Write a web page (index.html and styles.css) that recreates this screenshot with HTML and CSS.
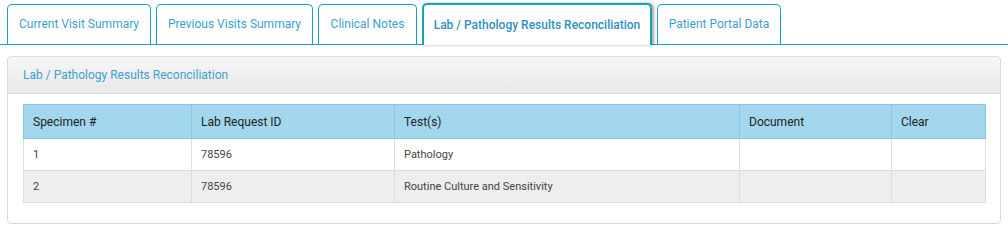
FILE: index.html
```html
<!DOCTYPE html>
<html>
<head>
<meta charset="utf-8">
<link rel="stylesheet" href="styles.css">
</head>
<body>
<ul class="tabs">
  <li class="tab t1">Current Visit Summary</li>
  <li class="tab t2">Previous Visits Summary</li>
  <li class="tab t3">Clinical Notes</li>
  <li class="tab t4 active">Lab / Pathology Results Reconciliation</li>
  <li class="tab t5">Patient Portal Data</li>
</ul>
<div class="panel">
  <div class="panel-head">Lab / Pathology Results Reconciliation</div>
  <div class="panel-body">
    <table class="grid">
      <colgroup>
        <col class="c1"><col class="c2"><col class="c3"><col class="c4"><col class="c5">
      </colgroup>
      <thead>
        <tr><th>Specimen #</th><th>Lab Request ID</th><th>Test(s)</th><th>Document</th><th>Clear</th></tr>
      </thead>
      <tbody>
        <tr><td>1</td><td>78596</td><td>Pathology</td><td></td><td></td></tr>
        <tr class="alt"><td>2</td><td>78596</td><td>Routine Culture and Sensitivity</td><td></td><td></td></tr>
      </tbody>
    </table>
  </div>
</div>
</body>
</html>
```
FILE: styles.css
```css
* { box-sizing: border-box; }
body {
  margin: 0;
  font-family: Roboto, "Liberation Sans", Arial, sans-serif;
  background: #fff;
}
.tabs {
  list-style: none;
  margin: 0;
  padding: 4px 0 0 7px;
  display: flex;
  gap: 5px;
  border-bottom: 1px solid #12a3c0;
  height: 45px;
}
.tab {
  height: 40px;
  border: 1px solid #12a3c0;
  border-bottom: none;
  border-radius: 5px 5px 0 0;
  padding: 0 0 1px 0;
  font-size: 12px;
  color: #3d9fcf;
  display: flex;
  align-items: center;
  justify-content: center;
  background: #fff;
  white-space: nowrap;
}
.t1 { width: 144px; }
.t2 { width: 157px; }
.t3 { width: 99px; }
.t4 { width: 230px; }
.t5 { width: 124px; }
.tab.active {
  height: 42px;
  margin-top: -1px;
  border: 2px solid #12a3c0;
  border-bottom: none;
  font-weight: 500;
  color: #2f8fc0;
  box-shadow: 2px 0 3px rgba(0,0,0,0.35);
  position: relative;
  z-index: 1;
}
.panel {
  margin: 11px 7px 0 7px;
  border: 1px solid #dcdcdc;
  border-radius: 4px;
  box-shadow: 0 1px 1px rgba(0,0,0,0.05);
}
.panel-head {
  height: 37px;
  padding: 0 15px;
  display: flex;
  align-items: center;
  font-size: 12px;
  color: #3e9fcc;
  background: linear-gradient(#f6f6f6, #e9e9e9);
  border-bottom: 1px solid #dcdcdc;
  border-radius: 4px 4px 0 0;
}
.panel-body {
  padding: 10px 15px 20px 15px;
}
.grid {
  width: 962px;
  border-collapse: collapse;
  table-layout: fixed;
}
.c1 { width: 168px; }
.c2 { width: 203px; }
.c3 { width: 345px; }
.c4 { width: 152px; }
.c5 { width: 94px; }
.grid th {
  height: 34px;
  background: #a2d7ee;
  border: 1px solid #8cc4de;
  text-align: left;
  font-weight: normal;
  font-size: 12px;
  color: #222;
  padding: 0 9px;
}
.grid td {
  height: 32px;
  border: 1px solid #dddddd;
  font-size: 11px;
  color: #444;
  padding: 0 9px;
  background: #fff;
}
.grid tr.alt td { background: #eeeeee; }
```
